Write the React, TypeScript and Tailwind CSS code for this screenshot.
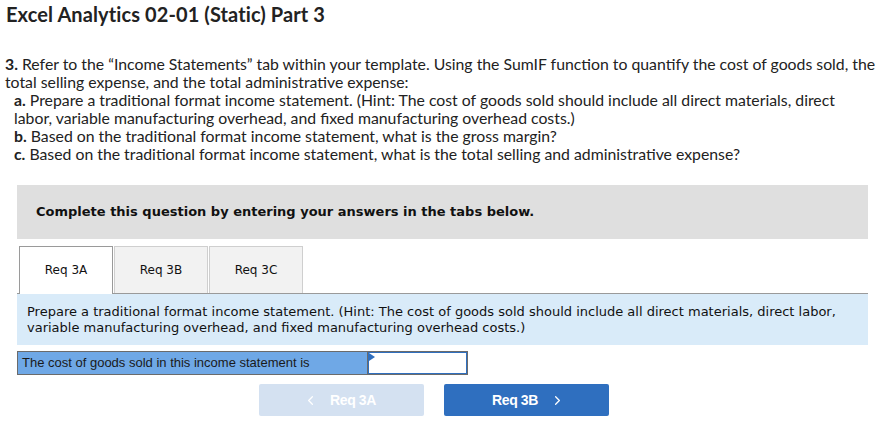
import { ChevronLeft, ChevronRight } from "lucide-react";

export default function App() {
  return (
    <div className="h-[442px] w-[884px] bg-white text-[#222]">
      {/* page title */}
      <h1 className="px-[6px] pt-[2px] font-['Lato',sans-serif] text-[20px] font-bold leading-[24px] tracking-[0.1px] text-[#222]">
        Excel Analytics 02-01 (Static) Part 3
      </h1>

      {/* question text */}
      <div className="mt-[29px] px-[5px] font-['Lato',sans-serif] text-[15.8px] leading-[18px] text-[#222]">
        <p>
          <b>3.</b> Refer to the “Income Statements” tab within your template. Using the SumIF
          function to quantify the cost of goods sold, the total selling expense, and the total
          administrative expense:
        </p>
        <div className="pl-[9px]">
          <p>
            <b>a.</b> Prepare a traditional format income statement. (Hint: The cost of goods
            sold should include all direct materials, direct
            <br />
            labor, variable manufacturing overhead, and fixed manufacturing overhead costs.)
          </p>
          <p>
            <b>b.</b> Based on the traditional format income statement, what is the gross margin?
          </p>
          <p>
            <b>c.</b> Based on the traditional format income statement, what is the total selling
            and administrative expense?
          </p>
        </div>
      </div>

      {/* instructions banner */}
      <div className="mx-[17px] mt-[22px] flex h-[54px] w-[851px] items-center bg-[#dfdfdf] px-[19px] font-['DejaVu_Sans',Verdana,sans-serif] text-[13px] font-bold text-[#111]">
        Complete this question by entering your answers in the tabs below.
      </div>

      {/* tabs */}
      <div className="mx-[17px] mt-[7px] w-[851px] font-['DejaVu_Sans',Verdana,sans-serif] text-[12px] text-[#111]">
        <div className="flex items-end pl-[2px]">
          <div className="relative z-10 -mb-px flex h-[48px] w-[94px] items-center justify-center border border-b-0 border-[#9a9a9a] bg-white pb-[2px]">
            Req 3A
          </div>
          <div className="ml-[1px] flex h-[47px] w-[94px] items-center justify-center border border-b-0 border-[#cfcfcf] bg-[#f2f2f2]">
            Req 3B
          </div>
          <div className="ml-[1px] flex h-[47px] w-[94px] items-center justify-center border border-b-0 border-[#cfcfcf] bg-[#f2f2f2]">
            Req 3C
          </div>
        </div>
        <div className="border-t border-[#9a9a9a] bg-[#d9ebf9] px-[10px] pb-[9px] pt-[10px] text-[13px] leading-[16px] text-[#111]">
          Prepare a traditional format income statement. (Hint: The cost of goods sold should
          include all direct materials, direct labor,
          <br />
          variable manufacturing overhead, and fixed manufacturing overhead costs.)
        </div>
      </div>

      {/* answer row */}
      <div className="mx-[17px] mt-[6px] flex h-[24px] w-[451px] border border-[#6b6b6b] font-['Liberation_Sans',Arial,sans-serif] text-[13px] text-[#1a1a1a]">
        <div className="flex w-[350px] items-center border-r border-[#6b6b6b] bg-[#6fa8e6] pl-[4px]">
          The cost of goods sold in this income statement is
        </div>
        <div className="relative flex-1 border border-[#2f6fbf] bg-white">
          <svg className="absolute left-0 top-0" width="6" height="8" viewBox="0 0 6 8">
            <path d="M0 0 L6 4 L0 8 Z" fill="#2f6fbf" />
          </svg>
        </div>
      </div>

      {/* navigation buttons */}
      <div className="mt-[9px] flex gap-[20px] pl-[259px] font-['Liberation_Sans',Arial,sans-serif] text-[14px] font-bold tracking-[-0.4px] text-white">
        <div className="flex h-[32px] w-[165px] items-center justify-center gap-[12px] rounded-[2px] bg-[#d4e1f1] pr-[4px]">
          <ChevronLeft className="h-[15px] w-[15px]" strokeWidth={2} />
          <span>Req 3A</span>
        </div>
        <div className="flex h-[32px] w-[165px] items-center justify-center gap-[12px] rounded-[2px] bg-[#2f6fbf] pl-[4px]">
          <span>Req 3B</span>
          <ChevronRight className="h-[15px] w-[15px]" strokeWidth={2} />
        </div>
      </div>
    </div>
  );
}
